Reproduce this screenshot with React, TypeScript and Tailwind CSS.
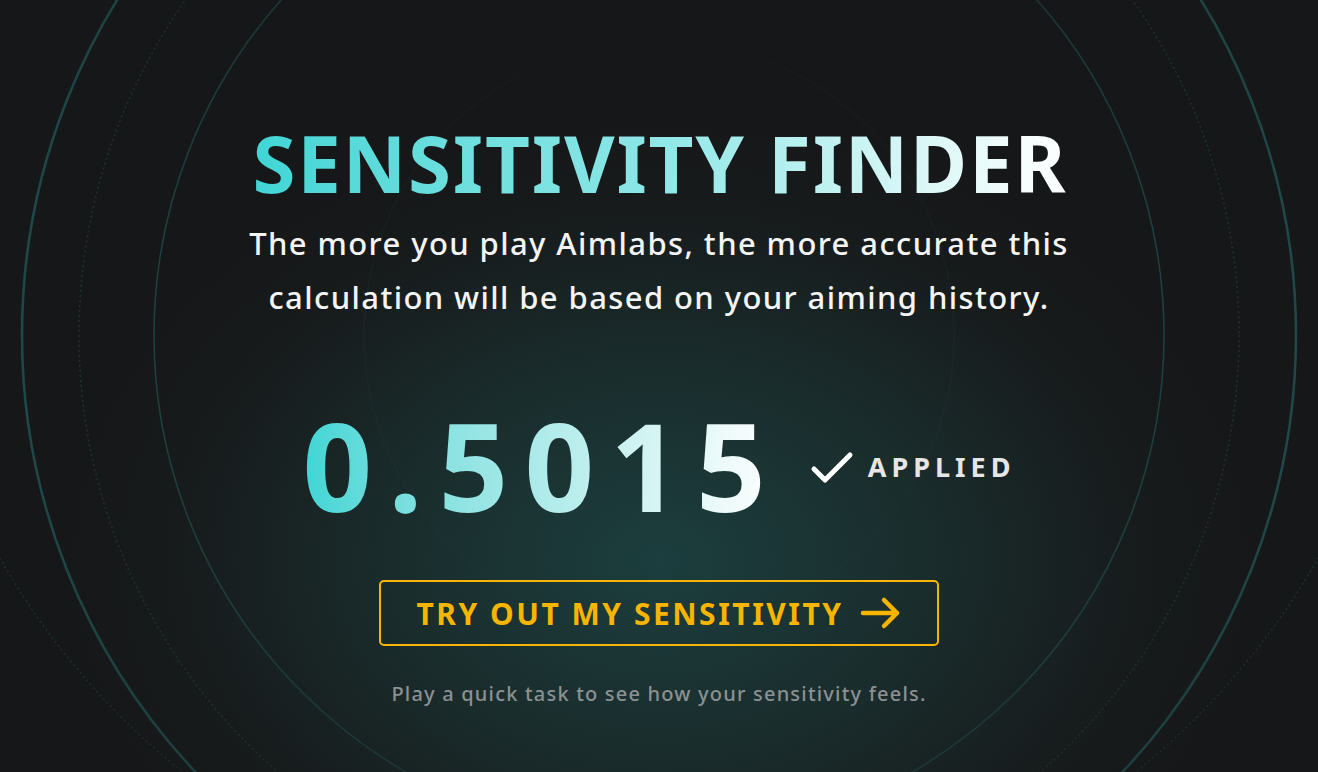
import React from "react";

const font = { fontFamily: "'Noto Sans', 'Open Sans', sans-serif" };

// faint concentric rings behind the content
const Rings = () => (
  <svg
    className="pointer-events-none absolute inset-0 h-full w-full"
    viewBox="0 0 1318 772"
    preserveAspectRatio="none"
  >
    <defs>
      <linearGradient id="ringFade" x1="0" y1="0" x2="1318" y2="0" gradientUnits="userSpaceOnUse">
        <stop offset="0" stopColor="#1f4a4a" stopOpacity="1" />
        <stop offset="0.3" stopColor="#1f4a4a" stopOpacity="0.5" />
        <stop offset="0.5" stopColor="#1f4a4a" stopOpacity="0.05" />
        <stop offset="0.7" stopColor="#1f4a4a" stopOpacity="0.5" />
        <stop offset="1" stopColor="#1f4a4a" stopOpacity="1" />
      </linearGradient>
    </defs>
    <g fill="none" stroke="url(#ringFade)">
      <circle cx="659" cy="335" r="637" strokeWidth="2.5" />
      <circle cx="659" cy="335" r="580" strokeWidth="1.5" strokeDasharray="2 3" opacity="0.6" />
      <circle cx="659" cy="335" r="505" strokeWidth="1.5" />
      <circle cx="659" cy="335" r="295" strokeWidth="1.2" opacity="0.3" />
      <circle cx="659" cy="180" r="760" strokeWidth="1.5" strokeDasharray="2 3" opacity="0.5" />
    </g>
  </svg>
);

export default function App() {
  return (
    <div
      className="relative h-[772px] w-full overflow-hidden bg-[#161718] bg-[radial-gradient(ellipse_600px_440px_at_660px_560px,#1c3e3e_0%,#1a2c2c_45%,#171b1c_80%,#161718_100%)]"
      style={font}
    >
      <Rings />
      <div className="relative flex flex-col items-center pt-[118px]">
        <h1 className="bg-gradient-to-r from-[#3fd5d5] via-[#8ee7e7] to-white bg-clip-text pl-[2px] text-[78px] leading-[90px] font-bold tracking-[1.8px] text-transparent">
          SENSITIVITY FINDER
        </h1>
        <p className="mt-[8px] text-center text-[31px] leading-[54px] font-medium tracking-[1.4px] text-[#f4f4f4]">
          The more you play Aimlabs, the more accurate this
          <br />
          calculation will be based on your aiming history.
        </p>

        <div className="mt-[76px] flex items-center">
          <span className="bg-gradient-to-r from-[#3fd5d5] to-white bg-clip-text text-[122px] leading-[130px] font-bold tracking-[16px] text-transparent">
            0.5015
          </span>
          <div className="ml-[28px] flex items-center pt-[4px]">
            <svg width="44" height="34" viewBox="0 0 44 34" fill="none">
              <path
                d="M4 19 L15 30 L40 5"
                stroke="#ffffff"
                strokeWidth="5"
                strokeLinecap="round"
                strokeLinejoin="round"
              />
            </svg>
            <span className="ml-[14px] text-[27px] font-bold tracking-[5px] text-[#e6e6e6]">
              APPLIED
            </span>
          </div>
        </div>

        <button className="mt-[50px] flex h-[66px] w-[560px] items-center justify-center rounded-[5px] border-2 border-[#f7b500] text-[#f7b500]">
          <span className="text-[30px] font-bold tracking-[2.5px]">
            TRY OUT MY SENSITIVITY
          </span>
          <svg className="ml-[16px]" width="42" height="34" viewBox="0 0 42 34" fill="none">
            <path
              d="M3 17 H37 M24 4 L37 17 L24 30"
              stroke="#f7b500"
              strokeWidth="4.5"
              strokeLinecap="round"
              strokeLinejoin="round"
            />
          </svg>
        </button>

        <p className="mt-[33px] text-[20px] font-medium tracking-[1.2px] text-[#8b9193]">
          Play a quick task to see how your sensitivity feels.
        </p>
      </div>
    </div>
  );
}
